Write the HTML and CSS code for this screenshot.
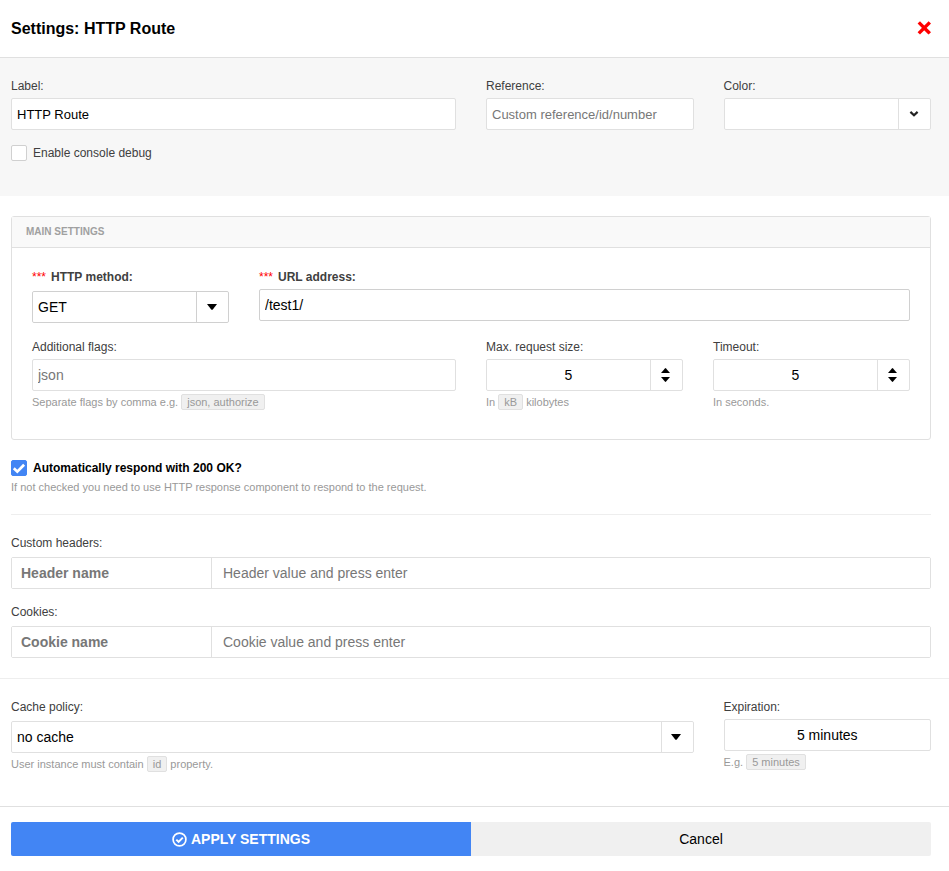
FILE: index.html
```html
<!DOCTYPE html>
<html lang="en">

<head>
    <meta charset="UTF-8">
    <meta name="viewport" content="width=device-width, initial-scale=1.0">
    <title>Settings: HTTP Route</title>
    <link rel="stylesheet" href="styles.css">
</head>

<body>
    <form class="settings">
        <header class="header">
            <h1>Settings: HTTP Route</h1>
            <button type="button" class="close" aria-label="Close">
                <svg width="14" height="16" viewBox="0 0 14 16"><path d="M3 2.6l8.6 8.6M11.6 2.6l-8.6 8.6" fill="none" stroke="currentColor" stroke-width="3.4" stroke-linecap="square"/></svg>
            </button>
        </header>

        <section class="common">
            <div class="row">
                <div class="col-6">
                    <label class="label" for="label">Label:</label>
                    <input class="input small" type="text" id="label" value="HTTP Route">
                </div>
                <div class="col-3">
                    <label class="label" for="reference">Reference:</label>
                    <input class="input small" type="text" id="reference" placeholder="Custom reference/id/number">
                </div>
                <div class="col-3">
                    <label class="label" for="color">Color:</label>
                    <div class="dropdown">
                        <select id="color">
                            <option></option>
                        </select>
                        <span class="arrow"><svg width="10" height="8" viewBox="0 0 10 8"><path d="M1.4 1.9L5 5.3l3.6-3.4" fill="none" stroke="#222" stroke-width="2.2"/></svg></span>
                    </div>
                </div>
            </div>
            <label class="checkbox"><input type="checkbox">Enable console debug</label>
        </section>

        <section class="content">
            <div class="panel">
                <h2>MAIN SETTINGS</h2>
                <div class="panel-body">
                    <div class="row">
                        <div class="col-3">
                            <label class="label required spaced" for="method">HTTP method:</label>
                            <div class="dropdown dark">
                                <select id="method">
                                    <option>GET</option>
                                </select>
                                <span class="arrow"><svg width="10" height="6" viewBox="0 0 10 6"><path d="M0 0h10L5.8 5.4q-.8.8-1.6 0z"/></svg></span>
                            </div>
                        </div>
                        <div class="col-9">
                            <label class="label required" for="url">URL address:</label>
                            <input class="input dark" type="text" id="url" value="/test1/">
                        </div>
                        <div class="col-6">
                            <label class="label" for="flags">Additional flags:</label>
                            <input class="input" type="text" id="flags" placeholder="json">
                            <p class="hint">Separate flags by comma e.g. <code>json, authorize</code></p>
                        </div>
                        <div class="col-3">
                            <label class="label" for="size">Max. request size:</label>
                            <div class="spinner">
                                <input type="text" id="size" value="5">
                                <div class="steps">
                                    <button type="button" aria-label="Increase size"><svg width="9" height="5" viewBox="0 0 9 5"><path d="M0 5h9L5.1.4Q4.5-.2 3.9.4z"/></svg></button>
                                    <button type="button" aria-label="Decrease size"><svg width="9" height="5" viewBox="0 0 9 5"><path d="M0 0h9L5.1 4.6q-.6.6-1.2 0z"/></svg></button>
                                </div>
                            </div>
                            <p class="hint">In <code>kB</code> kilobytes</p>
                        </div>
                        <div class="col-3">
                            <label class="label" for="timeout">Timeout:</label>
                            <div class="spinner">
                                <input type="text" id="timeout" value="5">
                                <div class="steps">
                                    <button type="button" aria-label="Increase timeout"><svg width="9" height="5" viewBox="0 0 9 5"><path d="M0 5h9L5.1.4Q4.5-.2 3.9.4z"/></svg></button>
                                    <button type="button" aria-label="Decrease timeout"><svg width="9" height="5" viewBox="0 0 9 5"><path d="M0 0h9L5.1 4.6q-.6.6-1.2 0z"/></svg></button>
                                </div>
                            </div>
                            <p class="hint">In seconds.</p>
                        </div>
                    </div>
                </div>
            </div>

            <div class="respond">
                <label class="checkbox bold"><input type="checkbox" checked>Automatically respond with 200 OK?</label>
                <p class="hint">If not checked you need to use HTTP response component to respond to the request.</p>
            </div>

            <div class="pairs">
                <div>
                    <label class="label spaced" for="header-name">Custom headers:</label>
                    <div class="pair">
                        <input type="text" id="header-name" placeholder="Header name">
                        <input type="text" aria-label="Header value" placeholder="Header value and press enter">
                    </div>
                </div>
                <div>
                    <label class="label spaced" for="cookie-name">Cookies:</label>
                    <div class="pair">
                        <input type="text" id="cookie-name" placeholder="Cookie name">
                        <input type="text" aria-label="Cookie value" placeholder="Cookie value and press enter">
                    </div>
                </div>
            </div>
        </section>

        <section class="cache">
            <div class="row">
                <div class="col-9">
                    <label class="label spaced" for="policy">Cache policy:</label>
                    <div class="dropdown">
                        <select id="policy">
                            <option>no cache</option>
                        </select>
                        <span class="arrow"><svg width="10" height="6" viewBox="0 0 10 6"><path d="M0 0h10L5.8 5.4q-.8.8-1.6 0z"/></svg></span>
                    </div>
                    <p class="hint">User instance must contain <code>id</code> property.</p>
                </div>
                <div class="col-3">
                    <label class="label" for="expiration">Expiration:</label>
                    <input class="input center" type="text" id="expiration" value="5 minutes">
                    <p class="hint">E.g. <code>5 minutes</code></p>
                </div>
            </div>
        </section>

        <footer class="footer">
            <button type="submit" class="apply">
                <svg width="15" height="15" viewBox="0 0 15 15" fill="none" stroke="currentColor"><circle cx="7.5" cy="7.5" r="6.4" stroke-width="1.7"/><path d="M4.3 7.6l2.3 2.3 4.2-4.3" stroke-width="2"/></svg>
                APPLY SETTINGS
            </button>
            <button type="button" class="cancel">Cancel</button>
        </footer>
    </form>
</body>

</html>
```

FILE: styles.css
```css
* {
    padding: 0;
    margin: 0;
    box-sizing: border-box;
}

body {
    font-family: Arial, "Liberation Sans", sans-serif;
    font-size: 12px;
    line-height: 20px;
    color: #404040;
    background-color: #fff;
}

input,
select,
button {
    font-family: inherit;
    font-size: 14px;
    color: #000;
    border: 0;
    outline: 0;
    background-color: #fff;
}

svg {
    display: block;
}

::placeholder {
    color: #777;
    opacity: 1;
}

.header {
    display: flex;
    align-items: center;
    justify-content: space-between;
    height: 58px;
    padding: 0 18px 0 11px;
    border-bottom: 1px solid #e0e0e0;
}

.header h1 {
    font-size: 16px;
    color: #000;
}

.close {
    color: #f00;
    background-color: transparent;
    cursor: pointer;
}

.common {
    padding: 18px 18px 33px 11px;
    background-color: #f7f7f7;
}

.common .checkbox {
    margin-top: 13px;
}

.row {
    display: grid;
    grid-template-columns: repeat(12, 1fr);
    gap: 14px 30px;
}

.row > div {
    min-width: 0;
}

.col-3 {
    grid-column: span 3;
}

.col-6 {
    grid-column: span 6;
}

.col-9 {
    grid-column: span 9;
}

/* form fields */

.label {
    display: block;
    margin-bottom: 2px;
}

.label.spaced {
    margin-bottom: 4px;
}

.required {
    font-weight: bold;
}

.required::before {
    content: '***';
    margin-right: 5px;
    font-weight: normal;
    color: #f00;
}

.input,
.dropdown,
.spinner,
.pair {
    width: 100%;
    height: 32px;
    border: 1px solid #e0e0e0;
    border-radius: 2px;
    background-color: #fff;
}

.input {
    display: block;
    padding: 0 5px;
}

.input.small {
    font-size: 13px;
}

.input.center {
    text-align: center;
}

.input.dark,
.dropdown.dark,
.dropdown.dark .arrow {
    border-color: #d0d0d0;
}

.dropdown {
    display: grid;
    grid-template-columns: 1fr 32px;
    grid-template-rows: 30px;
}

.dropdown select {
    grid-row: 1;
    grid-column: 1 / 3;
    padding: 0 38px 0 5px;
    appearance: none;
    border-radius: 2px;
}

.arrow {
    grid-row: 1;
    grid-column: 2;
    display: flex;
    align-items: center;
    justify-content: center;
    padding-right: 2px;
    border-left: 1px solid #e0e0e0;
    pointer-events: none;
}

.spinner {
    display: flex;
}

.spinner input {
    flex: 1;
    min-width: 0;
    text-align: center;
    border-radius: 2px;
}

.steps {
    display: flex;
    flex-direction: column;
    justify-content: center;
    gap: 4px;
    width: 32px;
    padding-right: 2px;
    border-left: 1px solid #e0e0e0;
}

.steps button {
    display: flex;
    justify-content: center;
    background-color: transparent;
}

.checkbox {
    display: flex;
    align-items: center;
    gap: 6px;
}

.checkbox.bold {
    font-weight: bold;
    color: #000;
}

.checkbox input {
    width: 16px;
    height: 16px;
    appearance: none;
    border: 1px solid #d0d0d0;
    border-radius: 2px;
}

.checkbox input:checked {
    border-color: #4285f4;
    background: #4285f4 url("data:image/svg+xml,%3Csvg xmlns='http://www.w3.org/2000/svg' viewBox='0 0 14 14'%3E%3Cpath d='M1.8 7.2l3.5 3.4 6.8-6.9' fill='none' stroke='%23fff' stroke-width='2.7'/%3E%3C/svg%3E") center / 14px 14px no-repeat;
}

.hint {
    margin-top: 2px;
    font-size: 11px;
    line-height: 18px;
    color: #999;
}

.hint code {
    display: inline-block;
    padding: 0 5px;
    font-family: inherit;
    line-height: 14px;
    border: 1px solid #e0e0e0;
    border-radius: 2px;
    background-color: #f0f0f0;
}

/* sections */

.content {
    padding: 20px 18px 20px 11px;
}

.panel {
    border: 1px solid #e0e0e0;
    border-radius: 3px;
}

.panel h2 {
    padding: 0 14px;
    font-size: 10px;
    line-height: 30px;
    color: #a0a0a0;
    border-bottom: 1px solid #e0e0e0;
    background-color: #f9f9f9;
}

.panel-body {
    padding: 19px 20px 28px;
}

.respond {
    padding: 18px 0;
    border-bottom: 1px solid #eee;
}

.respond .hint {
    margin-top: 0;
}

.pairs {
    display: flex;
    flex-direction: column;
    gap: 13px;
    padding-top: 18px;
}

.pair {
    display: flex;
}

.pair input {
    flex: 1;
    min-width: 0;
    padding: 0 11px;
}

.pair input:first-child {
    flex: 0 0 200px;
    padding: 0 9px;
    font-weight: bold;
    border-right: 1px solid #e0e0e0;
}

.cache {
    padding: 18px 18px 33px 11px;
    border-top: 1px solid #eee;
}

.footer {
    display: flex;
    padding: 15px 18px 15px 11px;
    border-top: 1px solid #e0e0e0;
}

.footer button {
    flex: 1;
    display: flex;
    align-items: center;
    justify-content: center;
    gap: 4px;
    height: 34px;
    cursor: pointer;
}

.footer .apply {
    font-weight: bold;
    color: #fff;
    border-radius: 2px 0 0 2px;
    background-color: #4285f4;
}

.footer .cancel {
    border-radius: 0 2px 2px 0;
    background-color: #f0f0f0;
}
```
